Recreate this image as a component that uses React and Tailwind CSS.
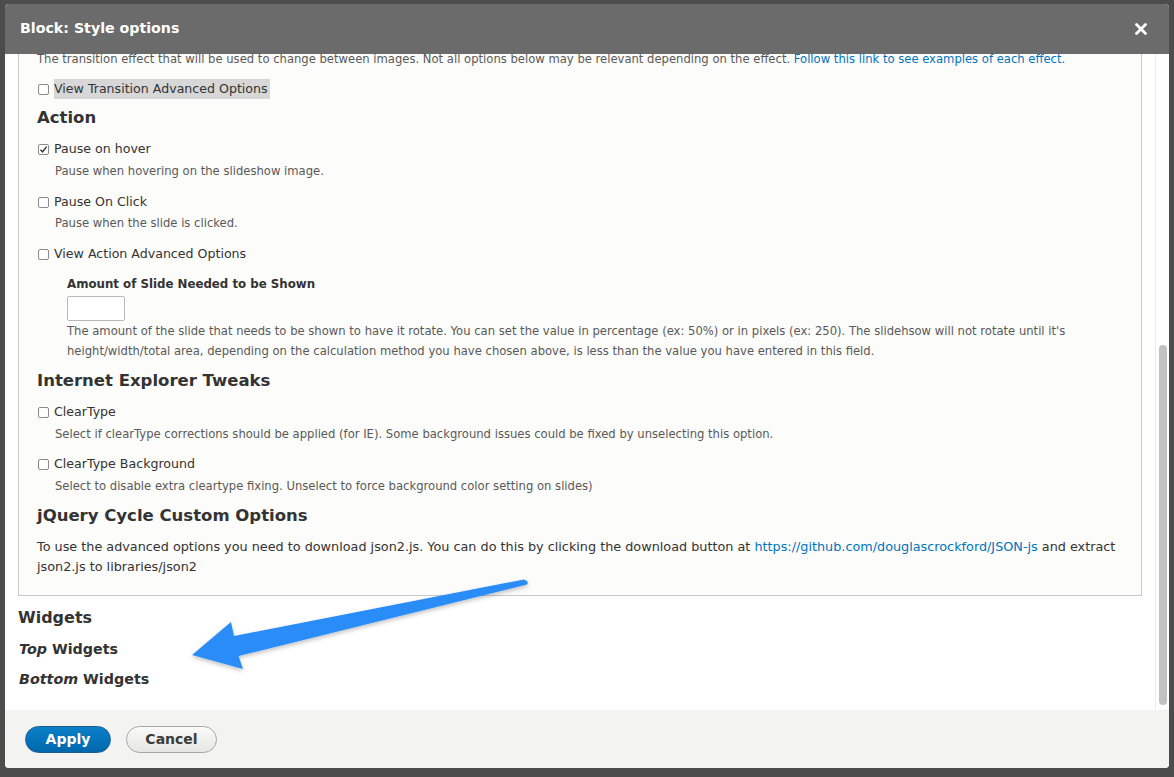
import React from 'react';

const font = "font-['DejaVu_Sans','Liberation_Sans',sans-serif]";

function Box({ checked }) {
  return (
    <span className="ml-[1px] mr-[5px] inline-flex h-[11px] w-[11px] shrink-0 items-center justify-center rounded-[2px] border border-[#8a8a8a] bg-white">
      {checked && (
        <svg width="9" height="9" viewBox="0 0 9 9">
          <path d="M1.5 4.8 L3.6 7 L7.6 1.6" fill="none" stroke="#333" strokeWidth="1.4" />
        </svg>
      )}
    </span>
  );
}

function Check({ label, checked, highlight, className = '' }) {
  return (
    <div className={`flex h-[20px] items-center text-[12.6px] leading-[20px] text-[#333] ${className}`}>
      <Box checked={checked} />
      <span className={highlight ? 'bg-[#d7d7d7] pr-[2px]' : ''}>{label}</span>
    </div>
  );
}

function Desc({ children, className = '' }) {
  return (
    <div className={`pl-[18px] text-[11.6px] leading-[18px] whitespace-nowrap text-[#595959] ${className}`}>
      {children}
    </div>
  );
}

function Heading({ children, className = '' }) {
  return <h3 className={`text-[16.5px] font-bold leading-[24px] text-[#333] ${className}`}>{children}</h3>;
}

export default function App() {
  return (
    <div className={`relative h-[777px] w-[1174px] overflow-hidden bg-[#4c4c4c] pl-[5px] pt-[4px] ${font}`}>
      <div className="flex h-[764px] w-[1164px] flex-col overflow-hidden rounded-[4px] bg-white">
        {/* ── Title bar ── */}
        <div className="flex h-[50px] shrink-0 items-center justify-between bg-[#6b6b6b] pl-[15px] pr-[22px]">
          <span className="text-[14.2px] font-bold text-white">Block: Style options</span>
          <svg width="12" height="12" viewBox="0 0 12 12">
            <path d="M1.5 1.5 L10.5 10.5 M10.5 1.5 L1.5 10.5" stroke="white" strokeWidth="2.8" strokeLinecap="round" />
          </svg>
        </div>

        {/* ── Scrolling body ── */}
        <div className="flex h-[656px] shrink-0 overflow-hidden">
          <div className="w-[1150px] pl-[13px] pr-[13px]">
            <div className="-mt-[6px] border border-t-0 border-[#c9c9c9] bg-[#fcfcfa] pb-[18px] pl-[18px] pr-[18px]">
              <div className="whitespace-nowrap pt-[1px] text-[11.6px] leading-[20px] text-[#595959]">
                The transition effect that will be used to change between images. Not all options below may be relevant depending on the effect.{' '}
                <a className="text-[#0074bd]">Follow this link to see examples of each effect.</a>
              </div>
              <Check className="mt-[10px]" label="View Transition Advanced Options" highlight />

              <Heading className="mt-[7px]">Action</Heading>
              <Check className="mt-[9px]" label="Pause on hover" checked />
              <Desc className="mt-[3px]">Pause when hovering on the slideshow image.</Desc>
              <Check className="mt-[12px]" label="Pause On Click" />
              <Desc className="mt-[2px]">Pause when the slide is clicked.</Desc>
              <Check className="mt-[12px]" label="View Action Advanced Options" />

              <div className="pl-[30px]">
                <div className="mt-[11px] text-[11.8px] font-bold leading-[18px] text-[#333]">Amount of Slide Needed to be Shown</div>
                <div className="mt-[3px] h-[25px] w-[58px] rounded-[2px] border border-[#b8b8b8] bg-white" />
                <div className="whitespace-nowrap text-[11.6px] leading-[20px] text-[#595959]">
                  The amount of the slide that needs to be shown to have it rotate. You can set the value in percentage (ex: 50%) or in pixels (ex: 250). The slidehsow will not rotate until it's
                  <br />
                  height/width/total area, depending on the calculation method you have chosen above, is less than the value you have entered in this field.
                </div>
              </div>

              <Heading className="mt-[8px]">Internet Explorer Tweaks</Heading>
              <Check className="mt-[9px]" label="ClearType" />
              <Desc className="mt-[3px]">Select if clearType corrections should be applied (for IE). Some background issues could be fixed by unselecting this option.</Desc>
              <Check className="mt-[11px]" label="ClearType Background" />
              <Desc className="mt-[3px]">Select to disable extra cleartype fixing. Unselect to force background color setting on slides)</Desc>

              <Heading className="mt-[9px]">jQuery Cycle Custom Options</Heading>
              <div className="mt-[9px] whitespace-nowrap text-[12.8px] leading-[20px] text-[#333]">
                To use the advanced options you need to download json2.js. You can do this by clicking the download button at{' '}
                <a className="text-[#0074bd]">https://github.com/douglascrockford/JSON-js</a> and extract
                <br />
                json2.js to libraries/json2
              </div>
            </div>

            <div className="mt-[10px] text-[16px] font-bold leading-[24px] text-[#333]">Widgets</div>
            <div className="mt-[8px] pl-[1px] text-[14.3px] font-bold leading-[22px] text-[#333]">
              <i>Top</i> Widgets
            </div>
            <div className="mt-[8px] pl-[1px] text-[14.3px] font-bold leading-[22px] text-[#333]">
              <i>Bottom</i> Widgets
            </div>
          </div>

          {/* ── Scrollbar ── */}
          <div className="w-[14px] border-l border-[#ececec] bg-white pl-[3px] pt-[291px]">
            <div className="h-[360px] w-[8px] rounded-full bg-[#c2c2c2]" />
          </div>
        </div>

        {/* ── Footer ── */}
        <div className="flex flex-1 items-start gap-[15px] bg-[#f3f3f2] pl-[20px] pt-[16px]">
          <button className="h-[27px] w-[86px] rounded-full border border-[#1e5c90] bg-gradient-to-b from-[#0b7fc7] to-[#0068ad] text-[14px] font-bold text-white">
            Apply
          </button>
          <button className="h-[27px] w-[91px] rounded-full border border-[#a6a6a6] bg-gradient-to-b from-[#fafaf8] to-[#e6e6e2] text-[14px] font-bold text-[#3b3b3b]">
            Cancel
          </button>
        </div>
      </div>

      {/* ── Annotation arrow ── */}
      <svg className="pointer-events-none absolute left-0 top-0" width="1174" height="777">
        <defs>
          <filter id="sh" x="-10%" y="-30%" width="120%" height="160%">
            <feDropShadow dx="0" dy="2" stdDeviation="2" floodColor="#000" floodOpacity="0.25" />
          </filter>
        </defs>
        <path
          d="M524 579.5 L234 636 L231 622 L192 655 L243 669 L238.5 656 L527 584.5 Q529.5 581.5 524 579.5 Z"
          fill="#2b8df7"
          filter="url(#sh)"
        />
      </svg>
    </div>
  );
}
